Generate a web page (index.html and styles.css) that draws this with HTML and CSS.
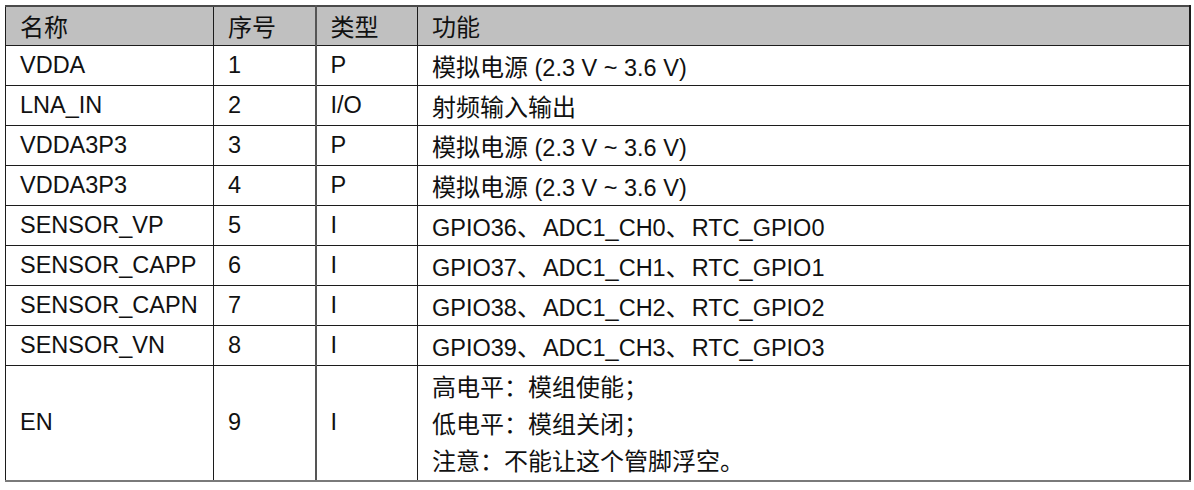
FILE: index.html
```html
<!DOCTYPE html>
<html lang="zh">
<head>
<meta charset="utf-8">
<link rel="stylesheet" href="styles.css">
</head>
<body>
<table class="pins">
  <colgroup>
    <col class="c-name">
    <col class="c-no">
    <col class="c-type">
    <col class="c-func">
  </colgroup>
  <thead>
    <tr><th class="zh">名称</th><th class="zh">序号</th><th class="zh">类型</th><th class="zh">功能</th></tr>
  </thead>
  <tbody>
    <tr><td>VDDA</td><td>1</td><td>P</td><td><span class="zh">模拟电源</span> (2.3 V ~ 3.6 V)</td></tr>
    <tr><td>LNA_IN</td><td>2</td><td>I/O</td><td class="zh">射频输入输出</td></tr>
    <tr><td>VDDA3P3</td><td>3</td><td>P</td><td><span class="zh">模拟电源</span> (2.3 V ~ 3.6 V)</td></tr>
    <tr><td>VDDA3P3</td><td>4</td><td>P</td><td><span class="zh">模拟电源</span> (2.3 V ~ 3.6 V)</td></tr>
    <tr><td>SENSOR_VP</td><td>5</td><td>I</td><td>GPIO36<span class="sep">、</span>ADC1_CH0<span class="sep">、</span>RTC_GPIO0</td></tr>
    <tr><td>SENSOR_CAPP</td><td>6</td><td>I</td><td>GPIO37<span class="sep">、</span>ADC1_CH1<span class="sep">、</span>RTC_GPIO1</td></tr>
    <tr><td>SENSOR_CAPN</td><td>7</td><td>I</td><td>GPIO38<span class="sep">、</span>ADC1_CH2<span class="sep">、</span>RTC_GPIO2</td></tr>
    <tr><td>SENSOR_VN</td><td>8</td><td>I</td><td>GPIO39<span class="sep">、</span>ADC1_CH3<span class="sep">、</span>RTC_GPIO3</td></tr>
    <tr class="tall">
      <td>EN</td><td>9</td><td>I</td>
      <td class="zh">
        <div class="line">高电平：模组使能；</div>
        <div class="line">低电平：模组关闭；</div>
        <div class="line">注意：不能让这个管脚浮空。</div>
      </td>
    </tr>
  </tbody>
</table>
</body>
</html>
```
FILE: styles.css
```css
html, body {
  margin: 0;
  padding: 0;
  background: #ffffff;
}

.pins {
  border-collapse: collapse;
  table-layout: fixed;
  margin: 5px 0 0 5px;
  width: 1186px;
  font-family: "Liberation Sans", "Noto Sans CJK SC", sans-serif;
  font-size: 23.5px;
  color: #111111;
}

.c-name { width: 208px; }
.c-no { width: 102px; }
.c-type { width: 102px; }
.c-func { width: auto; }

.pins th,
.pins td {
  border: 1px solid #1c1c1c;
  padding: 0 0 0 14px;
  height: 39px;
  text-align: left;
  vertical-align: middle;
  font-weight: normal;
  white-space: nowrap;
}

.pins thead th {
  background: #c0c0c0;
  border-top: 2px solid #4a4a4a;
  height: 37.5px;
}

.pins td:last-child,
.pins th:last-child {
  border-right: 2px solid #1c1c1c;
}

.pins tbody tr:last-child td {
  border-bottom: 2px solid #7a7a7a;
}

.pins td:nth-child(2),
.pins th:nth-child(2) {
  border-right: 2px solid #555555;
}

.zh {
  font-family: "Noto Sans CJK SC", sans-serif;
  font-size: 24px;
  letter-spacing: 0;
}

.sep {
  font-family: "Noto Sans CJK SC", sans-serif;
  font-size: 24px;
  letter-spacing: 2px;
}

.pins .tall td {
  height: 114px;
}

.line {
  line-height: 37px;
}
```
